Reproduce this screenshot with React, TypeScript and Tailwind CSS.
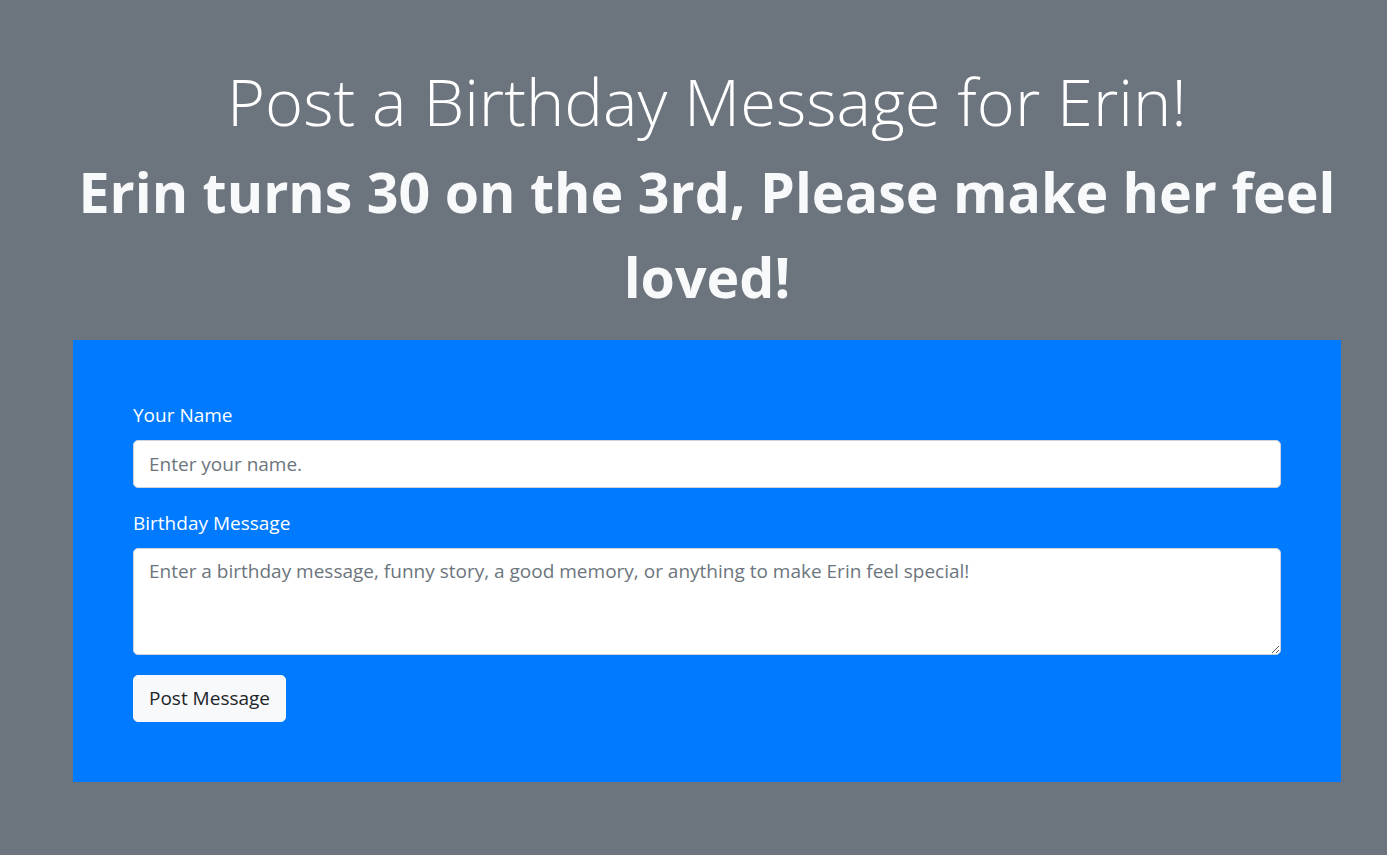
export default function App() {
  return (
    <div className="min-h-[855px] bg-[#6c757d] font-['Segoe_UI','Open_Sans',sans-serif]">
      <div className="ml-[73px] w-[1268px] pt-[59px]">
        <h1 className="text-center text-[65px] font-light leading-[84px] text-white">
          Post a Birthday Message for Erin!
        </h1>
        <h2 className="mt-[6px] text-center font-['Comic_Sans_MS','Open_Sans',sans-serif] text-[55.5px] font-bold leading-[85px] text-[#f8f9fa]">
          Erin turns 30 on the 3rd, Please make her feel loved!
        </h2>
        <form className="mt-[21px] bg-[#007bff] px-[60px] py-[60px] text-[19px] leading-[30px]">
          <div className="mb-[20px]">
            <label className="mb-[10px] block text-white">Your Name</label>
            <input
              type="text"
              placeholder="Enter your name."
              className="block h-[47.5px] w-full rounded-[5px] border border-[#ced4da] bg-white px-[15px] text-[19px] text-[#495057] placeholder:text-[#6c757d]"
            />
          </div>
          <div className="mb-[20px]">
            <label className="mb-[10px] block text-white">Birthday Message</label>
            <textarea
              rows={3}
              placeholder="Enter a birthday message, funny story, a good memory, or anything to make Erin feel special!"
              className="block h-[107px] w-full rounded-[5px] border border-[#ced4da] bg-white px-[15px] py-[7.5px] text-[19px] leading-[30px] text-[#495057] placeholder:text-[#6c757d]"
            />
          </div>
          <button
            type="button"
            className="h-[47.5px] rounded-[5px] border border-[#f8f9fa] bg-[#f8f9fa] px-[15px] text-[19px] text-[#212529]"
          >
            Post Message
          </button>
        </form>
      </div>
    </div>
  )
}
